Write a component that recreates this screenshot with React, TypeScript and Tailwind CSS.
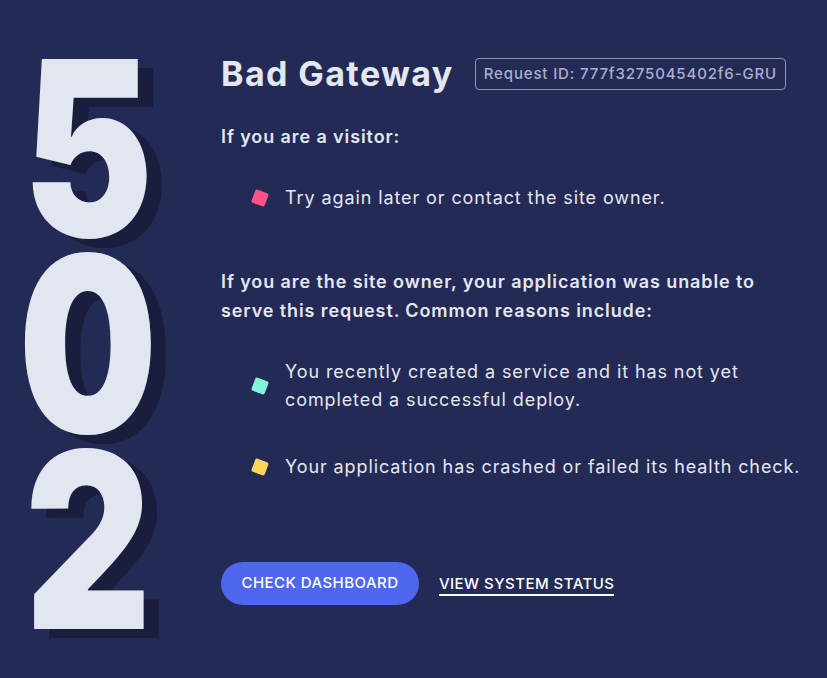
import React from 'react';

const bullets = {
  pink: 'bg-[#ff5484]',
  mint: 'bg-[#7ef5d8]',
  yellow: 'bg-[#ffd45c]',
};

function Bullet({ color }: { color: string }) {
  return <span className={`block w-[14px] h-[14px] rounded-[2px] rotate-[20deg] shrink-0 ${color}`} />;
}

export default function App() {
  return (
    <div
      className="min-h-[678px] w-full bg-[#232a55] text-[#e3e7f1] flex"
      style={{ fontFamily: 'Inter, "Noto Sans", sans-serif' }}
    >
      {/* Big stacked status code */}
      <div className="w-[176px] shrink-0 pt-[50px] flex flex-col items-center scale-x-80 origin-center">
        {['5', '0', '2'].map((d) => (
          <div
            key={d}
            className="h-[196px] leading-[196px] text-[245px] font-black text-[#e1e6f0] [text-shadow:19px_9px_0_#1a1d3b]"
          >
            {d}
          </div>
        ))}
      </div>

      {/* Message */}
      <div className="ml-[45px] pt-[54px] w-[590px] tracking-[0.9px]">
        <div className="flex items-center gap-[21px]">
          <h1 className="text-[34px] leading-[40px] font-bold tracking-[1.4px]">Bad Gateway</h1>
          <span className="border border-[#8e94b7] rounded-[4px] px-[8px] h-[32px] flex items-center text-[15px] font-medium text-[#aab0cc] tracking-[0.85px]">
            Request ID: 777f3275045402f6-GRU
          </span>
        </div>

        <p className="mt-[29px] text-[18px] leading-7 font-semibold">If you are a visitor:</p>

        <ul className="mt-[33px] pl-[32px]">
          <li className="flex items-center gap-[18px] text-[18px] leading-7">
            <Bullet color={bullets.pink} />
            <span>Try again later or contact the site owner.</span>
          </li>
        </ul>

        <p className="mt-[55px] text-[18px] leading-[29px] font-semibold">
          If you are the site owner, your application was unable to serve this request. Common reasons include:
        </p>

        <ul className="mt-[33px] pl-[32px] flex flex-col gap-[39px]">
          <li className="flex items-center gap-[18px] text-[18px] leading-7">
            <Bullet color={bullets.mint} />
            <span>
              You recently created a service and it has not yet
              <br />
              completed a successful deploy.
            </span>
          </li>
          <li className="flex items-center gap-[18px] text-[18px] leading-7">
            <Bullet color={bullets.yellow} />
            <span>Your application has crashed or failed its health check.</span>
          </li>
        </ul>

        <div className="mt-[81px] flex items-center gap-[20px] tracking-[0.45px]">
          <button className="h-[43px] w-[198px] rounded-full bg-[#4f66ee] text-white text-[15px] font-medium uppercase">
            Check Dashboard
          </button>
          <a className="text-[15px] font-medium uppercase text-white border-b-2 border-white leading-[20px] pt-[2px]">
            View System Status
          </a>
        </div>
      </div>
    </div>
  );
}
